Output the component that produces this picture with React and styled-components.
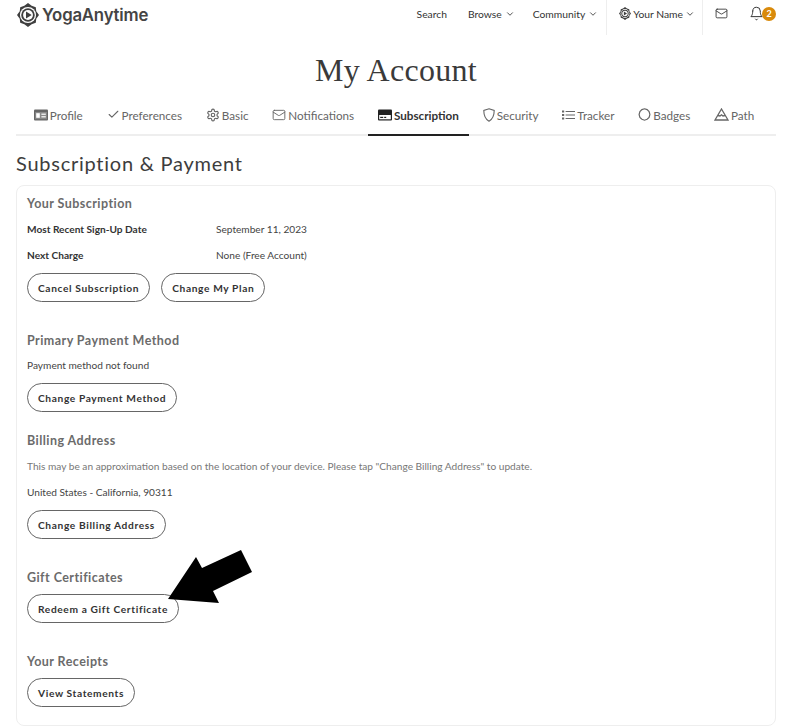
import React from 'react';
import styled, { createGlobalStyle } from 'styled-components';
import { LuCheck, LuSettings, LuMail, LuBell, LuChevronDown } from 'react-icons/lu';

const GlobalStyle = createGlobalStyle`
  html, body {
    margin: 0;
    padding: 0;
    height: 726px;
    overflow: hidden;
    background: #fff;
    font-family: "Lato", "Open Sans", sans-serif;
    color: #333;
  }
`;

const Page = styled.div`
  padding: 0 20px 0 16px;
  position: relative;
`;

const Header = styled.header`
  display: flex;
  align-items: center;
  justify-content: space-between;
  height: 35px;
`;

const Logo = styled.div`
  display: flex;
  align-items: center;
  gap: 3px;
  padding-left: 1px;
  font-family: "Inter", sans-serif;
  font-size: 16.8px;
  font-weight: 600;
  letter-spacing: -0.2px;
  color: #444;
  margin-top: -6px;
`;

const Nav = styled.nav`
  display: flex;
  align-items: center;
  height: 35px;
`;

const NavLink = styled.div`
  display: flex;
  align-items: center;
  gap: ${(p) => p.$gap || 3}px;
  font-size: 10.3px;
  color: #333;
  margin-left: ${(p) => p.$ml || 20}px;
  margin-top: -8px;
`;

const NavDivider = styled.div`
  width: 1px;
  height: 35px;
  background: #eee;
  margin-left: ${(p) => p.$ml || 8}px;
`;

const Badge = styled.span`
  width: 14px;
  height: 14px;
  border-radius: 50%;
  background: #d98a0b;
  color: #fff;
  font-size: 9px;
  font-weight: 700;
  display: flex;
  align-items: center;
  justify-content: center;
  margin-left: -5px;
`;

const Title = styled.h1`
  margin: 16px 0 0;
  text-align: center;
  font-family: "Liberation Serif", serif;
  font-weight: 400;
  font-size: 32px;
  line-height: 38px;
  letter-spacing: 0.3px;
  color: #3a3a3a;
`;

const Tabs = styled.div`
  display: flex;
  justify-content: center;
  gap: 3.75px;
  margin-top: 10px;
  padding-right: 4px;
  border-bottom: 2px solid #eee;
  height: 35px;
`;

const Tab = styled.div`
  display: flex;
  align-items: center;
  gap: 2px;
  padding: 0 10px 4px;
  box-sizing: border-box;
  height: 37px;
  margin-bottom: -2px;
  font-size: 11.7px;
  font-weight: ${(p) => (p.$active ? 700 : 400)};
  color: ${(p) => (p.$active ? '#333' : '#666')};
  border-bottom: 2px solid ${(p) => (p.$active ? '#222' : 'transparent')};
  svg {
    color: ${(p) => (p.$active ? '#222' : '#666')};
  }
`;

const SectionTitle = styled.h2`
  margin: 13px 0 8px;
  font-size: 20px;
  line-height: 28px;
  font-weight: 400;
  letter-spacing: 0.75px;
  color: #3d3d3d;
`;

const Card = styled.div`
  border: 1px solid #eee;
  border-radius: 8px;
  padding: 9px 10px 18px;
`;

const Heading = styled.h3`
  margin: ${(p) => p.$mt || 0}px 0 0;
  font-size: 12.5px;
  line-height: 18px;
  font-weight: 700;
  letter-spacing: 0.45px;
  color: #6b6b6b;
`;

const InfoRow = styled.div`
  display: grid;
  grid-template-columns: 189px 1fr;
  font-size: 10.15px;
  line-height: 14px;
  margin-top: ${(p) => p.$mt || 12}px;
  color: #444;
`;

const InfoLabel = styled.span`
  font-weight: 700;
  color: #333;
`;

const Line = styled.p`
  margin: ${(p) => p.$mt || 0}px 0 0;
  font-size: 10.15px;
  line-height: 14px;
  color: ${(p) => (p.$muted ? '#777' : '#444')};
`;

const ButtonRow = styled.div`
  display: flex;
  gap: 11px;
  margin-top: ${(p) => p.$mt}px;
`;

const Button = styled.button`
  height: 29px;
  padding: 0 10px;
  border: 1px solid #666;
  border-radius: 15px;
  background: #fff;
  font-family: inherit;
  font-size: 10.2px;
  font-weight: 700;
  letter-spacing: 0.62px;
  color: #333;
`;

const Arrow = styled.svg`
  position: absolute;
  left: 160px;
  top: 545px;
`;

const LogoMark = ({ size, height }) => (
  <svg width={size} height={height} viewBox="0 0 24 26">
    <path d="M12 0l4 3 4.5 1.5L21 9l3 4-3 4-.5 4.5L16 23l-4 3-4-3-4.5-1.5L3 17l-3-4 3-4 .5-4.5L8 3z" fill="#3f3f3f" />
    <circle cx="12" cy="13" r="8.8" fill="#fff" />
    <circle cx="12" cy="13" r="7.4" fill="#3f3f3f" />
    <circle cx="12" cy="13" r="5.4" fill="#fff" />
    <path d="M9.8 9.2L16 13l-6.2 3.8z" fill="#3f3f3f" />
  </svg>
);

const ProfileIcon = () => (
  <svg width="14" height="12" viewBox="0 0 14 12">
    <rect y=".5" width="14" height="11" rx="1" fill="#666" />
    <rect x="1.2" y="3" width="11.6" height="7.2" fill="#8a8a8a" />
    <rect x="2.2" y="4.2" width="3.6" height="4.6" fill="#fff" />
    <rect x="7.4" y="4.6" width="4.4" height="1.2" fill="#fff" />
    <rect x="7.4" y="7.2" width="4.4" height="1.2" fill="#fff" />
  </svg>
);

const CardIcon = () => (
  <svg width="14" height="12" viewBox="0 0 14 12">
    <rect y=".5" width="14" height="11" rx="1" fill="#222" />
    <rect x="1.2" y="6" width="11.6" height="4.3" fill="#fff" />
    <rect x="2.2" y="7.8" width="3" height="1.2" fill="#222" />
    <rect x="6.2" y="7.8" width="2" height="1.2" fill="#222" />
  </svg>
);

const ShieldIcon = () => (
  <svg width="12" height="14" viewBox="0 0 12 14" fill="none" stroke="#666" strokeWidth="1.1">
    <path d="M6 .8l5.2 1.7c0 4.6-.8 8.2-5.2 10.7C1.6 10.7.8 7.1.8 2.5z" />
  </svg>
);

const TrackerIcon = () => (
  <svg width="13" height="12" viewBox="0 0 13 12" fill="#666">
    <rect x="0" y="1.5" width="2.2" height="2" />
    <rect x="0" y="5" width="2.2" height="2" />
    <rect x="0" y="8.5" width="2.2" height="2" />
    <rect x="3.6" y="2" width="9.4" height="1" />
    <rect x="3.6" y="5.5" width="9.4" height="1" />
    <rect x="3.6" y="9" width="9.4" height="1" />
  </svg>
);

const BadgeIcon = () => (
  <svg width="13" height="13" viewBox="0 0 13 13" fill="none" stroke="#666" strokeWidth="1.2">
    <path d="M6.5 .8l2.6 .8 2 2 .8 2.9-.8 2.9-2 1.9-2.6 .9-2.6-.9-2-1.9-.8-2.9.8-2.9 2-2z" />
  </svg>
);

const PathIcon = () => (
  <svg width="15" height="13" viewBox="0 0 15 13" fill="none" stroke="#666" strokeWidth="1.3">
    <path d="M7.5 1L14 12H1z" />
    <path d="M4 7.5l2 .5 1.5-1.2 1.5 1.2 2-.5" />
  </svg>
);

const thin = { strokeWidth: 1.6 };

const tabs = [
  { label: 'Profile', icon: <ProfileIcon /> },
  { label: 'Preferences', icon: <LuCheck size={13} strokeWidth={2} /> },
  { label: 'Basic', icon: <LuSettings size={14} strokeWidth={2} /> },
  { label: 'Notifications', icon: <LuMail size={14} {...thin} /> },
  { label: 'Subscription', icon: <CardIcon />, active: true },
  { label: 'Security', icon: <ShieldIcon /> },
  { label: 'Tracker', icon: <TrackerIcon /> },
  { label: 'Badges', icon: <BadgeIcon /> },
  { label: 'Path', icon: <PathIcon /> },
];

const App = () => (
  <Page>
    <GlobalStyle />
    <Header>
      <Logo>
        <LogoMark size={22} height={24} />
        YogaAnytime
      </Logo>
      <Nav>
        <NavLink>Search</NavLink>
        <NavLink $ml={21}>Browse <LuChevronDown size={10} /></NavLink>
        <NavLink $ml={18}>Community <LuChevronDown size={10} /></NavLink>
        <NavDivider />
        <NavLink $ml={12} $gap={2}><LogoMark size={12} height={13} /> Your Name <LuChevronDown size={10} /></NavLink>
        <NavDivider $ml={7} />
        <NavLink $ml={12}><LuMail size={13} {...thin} /></NavLink>
        <NavLink $ml={21}><LuBell size={15} {...thin} /><Badge>2</Badge></NavLink>
      </Nav>
    </Header>
    <Title>My Account</Title>
    <Tabs>
      {tabs.map((tab) => (
        <Tab key={tab.label} $active={tab.active}>
          {tab.icon}
          {tab.label}
        </Tab>
      ))}
    </Tabs>
    <SectionTitle>Subscription &amp; Payment</SectionTitle>
    <Card>
      <Heading>Your Subscription</Heading>
      <InfoRow $mt={9}>
        <InfoLabel>Most Recent Sign-Up Date</InfoLabel>
        <span>September 11, 2023</span>
      </InfoRow>
      <InfoRow>
        <InfoLabel>Next Charge</InfoLabel>
        <span>None (Free Account)</span>
      </InfoRow>
      <ButtonRow $mt={11}>
        <Button>Cancel Subscription</Button>
        <Button>Change My Plan</Button>
      </ButtonRow>
      <Heading $mt={30}>Primary Payment Method</Heading>
      <Line $mt={8}>Payment method not found</Line>
      <ButtonRow $mt={11}>
        <Button>Change Payment Method</Button>
      </ButtonRow>
      <Heading $mt={20}>Billing Address</Heading>
      <Line $mt={9} $muted>This may be an approximation based on the location of your device. Please tap "Change Billing Address" to update.</Line>
      <Line $mt={12}>United States - California, 90311</Line>
      <ButtonRow $mt={11}>
        <Button>Change Billing Address</Button>
      </ButtonRow>
      <Heading $mt={30}>Gift Certificates</Heading>
      <ButtonRow $mt={7}>
        <Button>Redeem a Gift Certificate</Button>
      </ButtonRow>
      <Heading $mt={30}>Your Receipts</Heading>
      <ButtonRow $mt={7}>
        <Button>View Statements</Button>
      </ButtonRow>
    </Card>
    <Arrow width="100" height="65" viewBox="160 545 100 65">
      <path d="M168 599L196 557L202 568L241 550L252 572L213 591L219 603z" fill="#000" />
    </Arrow>
  </Page>
);

export default App;
